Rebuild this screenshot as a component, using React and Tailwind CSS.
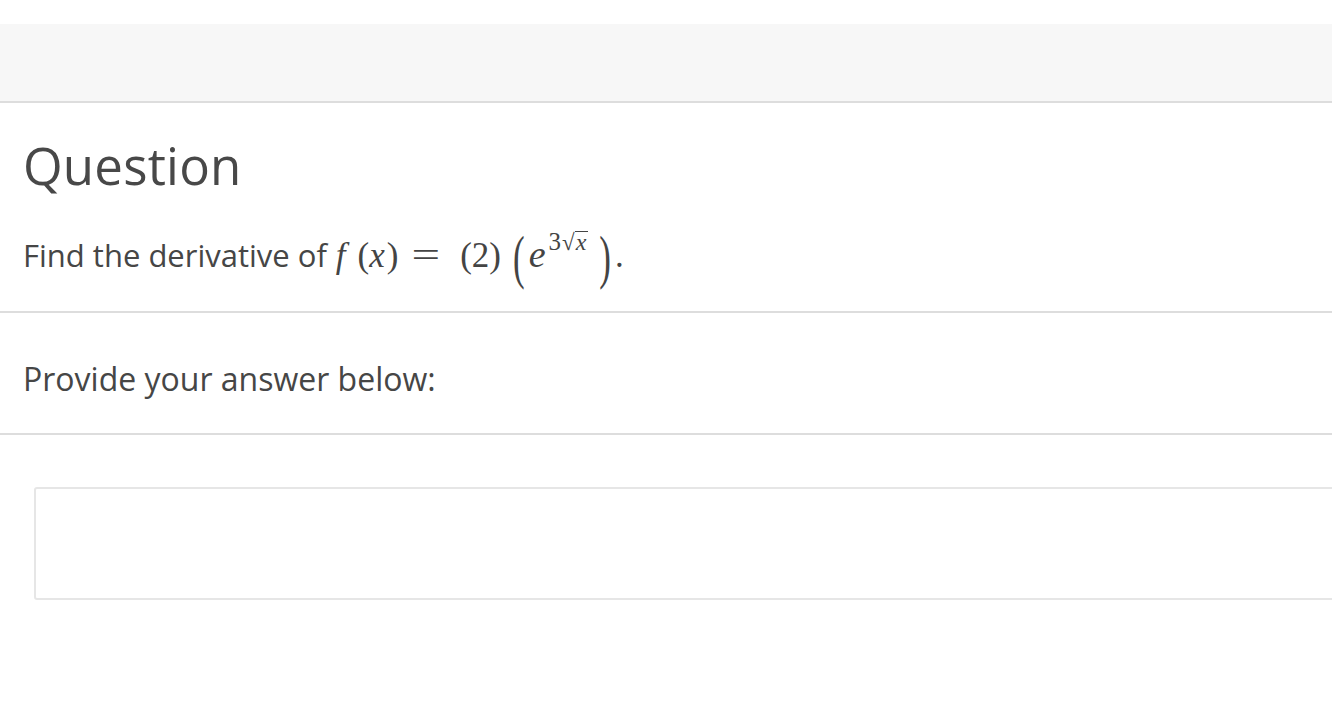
import React from "react";

const serif = { fontFamily: '"Liberation Serif", "DejaVu Serif", serif' };

function MathExpr() {
  return (
    <span
      className="inline-flex items-baseline text-[35px] leading-[48px] text-[#444] ml-[9px]"
      style={serif}
    >
      <span className="italic">f</span>
      <span className="ml-[12px]">(</span>
      <span className="italic">x</span>
      <span className="ml-[2px]">)</span>
      <span className="inline-block ml-[18px] mr-[24px] scale-x-[1.45]">=</span>
      <span>(2)</span>
      <span className="inline-block ml-[12px] scale-y-[1.72] translate-y-[3px] origin-[50%_54%]">(</span>
      <span className="italic text-[38px] ml-[4px]">e</span>
      <span className="inline-flex items-baseline text-[25px] leading-[24px] relative -top-[17px] ml-[3px]">
        <span>3</span>
        <span className="text-[23px] ml-[1px]">√</span>
        <span className="italic text-[24px] border-t-[1.5px] border-[#444] leading-[20px] pl-[1px] pr-[2px]">x</span>
      </span>
      <span className="inline-block ml-[11px] scale-y-[1.72] translate-y-[3px] origin-[50%_54%]">)</span>
      <span className="ml-[4px]">.</span>
    </span>
  );
}

export default function App() {
  return (
    <div
      className="w-[1332px] h-[715px] overflow-hidden bg-white text-[#464646]"
      style={{ fontFamily: '"Open Sans", "Noto Sans", sans-serif' }}
    >
      <div className="mt-[24px] h-[77px] bg-[#f7f7f7] border-b-2 border-[#dddddd] box-content" />

      <div className="px-[23px] pt-[33px] pb-[33px] border-b-2 border-[#dddddd]">
        <h1 className="text-[51px] leading-[58px] font-normal text-[#484848] tracking-[0.2px]">
          Question
        </h1>
        <p className="mt-[36px] h-[48px] text-[31px] leading-[48px] flex items-baseline">
          <span>Find the derivative of</span>
          <MathExpr />
        </p>
      </div>

      <div className="px-[23px] pt-[42px] pb-[30px] border-b-2 border-[#dddddd]">
        <p className="text-[32px] leading-[48px]">Provide your answer below:</p>
      </div>

      <div className="pl-[34px] pt-[52px]">
        <div className="w-[1400px] h-[113px] border-2 border-[#e6e6e6] rounded-[3px] bg-white" />
      </div>
    </div>
  );
}
